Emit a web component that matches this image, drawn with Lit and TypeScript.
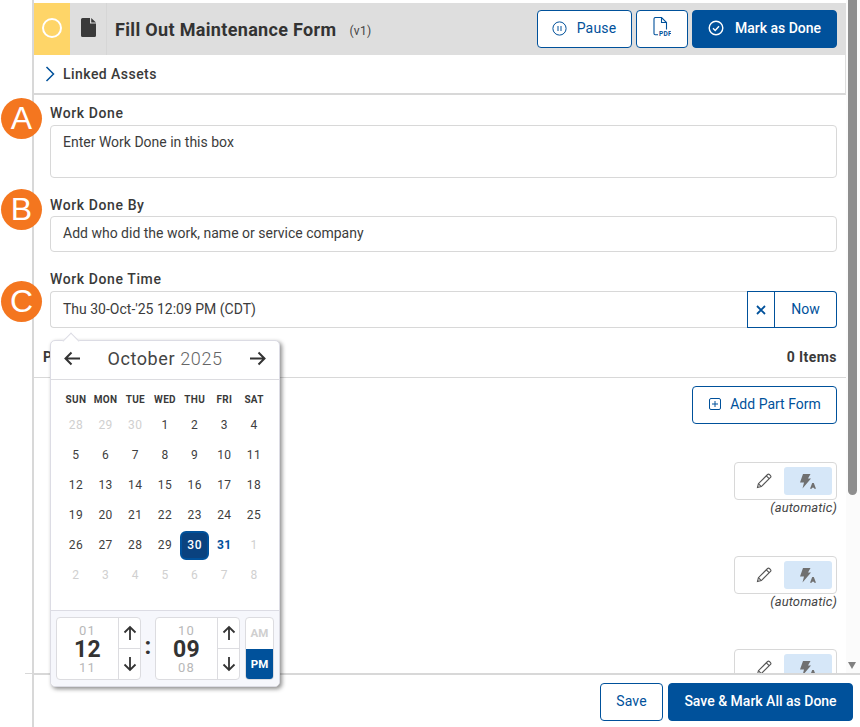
import { LitElement, html, css } from "lit";
import { customElement } from "lit/decorators.js";

const upArrow = html`<svg width="14" height="16" viewBox="0 0 14 16" fill="none" stroke="#333" stroke-width="1.8"><path d="M7 15V2M1.5 7.5L7 2l5.5 5.5"/></svg>`;
const downArrow = html`<svg width="14" height="16" viewBox="0 0 14 16" fill="none" stroke="#333" stroke-width="1.8"><path d="M7 1v13M1.5 8.5L7 14l5.5-5.5"/></svg>`;
const pencil = html`<svg width="16" height="16" viewBox="0 0 16 16" fill="none" stroke="#555" stroke-width="1.1"><path d="M1.5 14.5l.9-3.8L11.6 1.5a1.3 1.3 0 0 1 1.8 0l1.1 1.1a1.3 1.3 0 0 1 0 1.8L5.300 13.600z"/><path d="M2.4 10.700l2.900 2.900M10.300 2.800l2.900 2.900"/></svg>`;
const bolt = html`<svg width="16" height="15" viewBox="0 0 16 15" fill="#707070"><path d="M3 0H10.500L8 4.500H11L2.500 14.500 4 8.500H0z"/><path d="M10 14.700L12.200 9h1.600L16 14.700h-1.700l-.35-1h-1.900l-.35 1z"/></svg>`;

const WEEK = ["SUN", "MON", "TUE", "WED", "THU", "FRI", "SAT"];
const DAYS: [string, string][] = [
  ["28", "o"], ["29", "o"], ["30", "o"], ["1", ""], ["2", ""], ["3", ""], ["4", ""],
  ["5", ""], ["6", ""], ["7", ""], ["8", ""], ["9", ""], ["10", ""], ["11", ""],
  ["12", ""], ["13", ""], ["14", ""], ["15", ""], ["16", ""], ["17", ""], ["18", ""],
  ["19", ""], ["20", ""], ["21", ""], ["22", ""], ["23", ""], ["24", ""], ["25", ""],
  ["26", ""], ["27", ""], ["28", ""], ["29", ""], ["30", "sel"], ["31", "today"], ["1", "o"],
  ["2", "o"], ["3", "o"], ["4", "o"], ["5", "o"], ["6", "o"], ["7", "o"], ["8", "o"],
];

@customElement("app-root")
export class AppRoot extends LitElement {
  static styles = css`
    :host { display: block; width: 860px; height: 727px; position: relative; overflow: hidden; background: #fff;
      font-family: Roboto, "Liberation Sans", sans-serif; color: #333; font-size: 14px; }
    * { box-sizing: border-box; }
    .page { display: flex; height: 727px; padding-left: 32px; }
    .main { flex: 1; min-width: 0; display: flex; flex-direction: column; border-left: 2px solid #d8d8d8; }
    .viewport { flex: 1; min-height: 0; display: flex; overflow: hidden; }
    .content { flex: 1; min-width: 0; padding-top: 3px; overflow: hidden; }
    .scrollbar { width: 14px; background: #fbfbfb; padding: 0 3px 0 2px; position: relative; }
    .thumb { height: 495px; background: #8e8e8e; border-radius: 0 0 5px 5px; }
    .sb-arrow { position: absolute; left: 2px; bottom: 4px; width: 0; height: 0; border-left: 4.5px solid transparent; border-right: 4.5px solid transparent; border-top: 7px solid #808080; }

    .head { height: 52px; background: #dedede; display: flex; align-items: center; }
    .status { width: 36px; height: 52px; background: #fed568; display: flex; align-items: center; justify-content: center; padding-bottom: 2px; }
    .ring { width: 20px; height: 20px; border: 2px solid #fff; border-radius: 50%; }
    .doc { width: 37px; height: 52px; display: flex; align-items: center; justify-content: center; border-right: 1px solid #d6d6d6; padding-bottom: 3px; }
    .title { margin-left: 8px; font-size: 18px; font-weight: 700; letter-spacing: .33px; color: #333; }
    .ver { margin-left: 13px; font-size: 12px; color: #444; letter-spacing: .3px; margin-top: 4px; }
    .head-actions { margin-left: auto; margin-right: 9px; display: flex; gap: 4px; }
    .btn { height: 38px; border: 1px solid #00519b; border-radius: 4px; background: #fff; color: #00519b; font: 400 14px Roboto, sans-serif; letter-spacing: .2px;
      display: inline-flex; align-items: center; justify-content: center; gap: 9px; padding: 0 0 2px; }
    .btn.solid { background: #00519b; color: #fff; font-weight: 500; letter-spacing: 0; }
    .pause { width: 95px; gap: 10px; padding-right: 1px; }
    .pdf { width: 52px; }
    .done { width: 145px; gap: 11px; }
    .linked { height: 40px; display: flex; align-items: center; gap: 8px; padding-left: 11px; border-right: 1px solid #dedede; border-bottom: 2px solid #d8d8d8; font-size: 14px; font-weight: 500; letter-spacing: .45px; color: #3a3a3a; }

    .fields { padding: 0 9px 0 16px; }
    .label { display: block; font-size: 14px; line-height: 16px; font-weight: 500; letter-spacing: .6px; color: #3a3a3a; }
    .box { border: 1px solid #d8d8d8; border-radius: 4px; padding: 0 12px 2px; font-size: 14px; color: #3c3c3c; background: #fff; display: flex; align-items: center; }
    .l1 { margin-top: 10px; }
    .area { height: 53px; margin-top: 4px; align-items: flex-start; padding-top: 8px; }
    .l2 { margin-top: 19px; }
    .by { height: 36px; margin-top: 3px; }
    .l3 { margin-top: 19px; }
    .time-row { display: flex; height: 37px; margin-top: 4px; }
    .time-row .box { flex: 1; border-right: none; border-radius: 4px 0 0 4px; }
    .clear { width: 28px; border: 1px solid #00519b; background: #fff; display: flex; align-items: center; justify-content: center; }
    .now { width: 62px; border: 1px solid #00519b; border-left: none; border-radius: 0 4px 4px 0; color: #00519b; font-size: 14px; display: flex; align-items: center; justify-content: center; padding-bottom: 2px; }

    .parts { margin-top: 20px; height: 30px; padding: 0 9px 0 9px; display: flex; justify-content: space-between; border-bottom: 1px solid #d8d8d8; font-size: 14px; font-weight: 700; letter-spacing: .45px; line-height: 19px; color: #3a3a3a; }
    .rows { padding: 8px 9px 0 0; display: flex; flex-direction: column; align-items: flex-end; }
    .add { width: 145px; gap: 9px; letter-spacing: 0; padding-left: 1px; }
    .toggle { width: 103px; height: 38px; border: 1px solid #d8d8d8; border-radius: 4px; display: flex; align-items: center; padding: 4px 4px 4px 0; flex: none; }
    .toggle .p { width: 49px; display: flex; justify-content: center; padding-left: 8px; }
    .toggle .a { flex: 1; height: 28px; background: #d6e7f8; border-radius: 3px; display: flex; align-items: center; justify-content: center; }
    .auto { font-size: 13px; font-style: italic; color: #444; letter-spacing: .12px; line-height: 14px; margin-top: 1px; height: 55px; }
    .t1 { margin-top: 38px; }
    .t3 { margin-top: -1px; }

    .foot { height: 54px; border-top: 2px solid #d8d8d8; display: flex; justify-content: flex-end; gap: 5px; padding: 8px 7px 0 0; background: #fff; position: relative; z-index: 1; }
    .tick { position: absolute; left: -9px; top: -2px; width: 9px; height: 1px; background: #d8d8d8; }
    .save { width: 63px; }
    .saveall { width: 185px; }

    .badge { position: absolute; left: 1px; width: 41px; height: 41px; border-radius: 50%; background: #f4761f; color: #fff; font: 400 32px "Liberation Sans", Arial, sans-serif; display: flex; align-items: center; justify-content: center; }

    .cal { position: absolute; z-index: 3; left: 50px; top: 340px; width: 230px; height: 347px; background: #fff; border: 1px solid #dcdce4; border-radius: 5px; box-shadow: 2px 2px 4px rgba(0,0,0,.45); display: flex; flex-direction: column; }
    .tip { position: absolute; left: 14px; top: -6px; width: 12px; height: 12px; background: #fff; border-left: 1px solid #dcdce4; border-top: 1px solid #dcdce4; transform: rotate(45deg); }
    .cal-head { height: 39px; display: flex; align-items: center; justify-content: space-between; padding: 0 12px 4px 12px; border-bottom: 1px solid #dcdce0; position: relative; }
    .month { font-size: 18px; letter-spacing: .6px; color: #444; font-weight: 400; }
    .month span { color: #666; font-weight: 300; }
    .grid { display: grid; grid-template-columns: repeat(7, 29.7px); justify-content: center; padding: 0 4px; }
    .wk { height: 30px; display: flex; align-items: center; justify-content: center; font-size: 10px; font-weight: 700; letter-spacing: .3px; color: #3a3a3a; padding-top: 8px; }
    .d { height: 30px; display: flex; align-items: center; justify-content: center; font-size: 12px; letter-spacing: .5px; color: #404040; }
    .d.o { color: #d0d0d0; }
    .d.today { color: #00519b; font-weight: 700; }
    .d.sel span { width: 29px; height: 29px; display: flex; align-items: center; justify-content: center; color: #fff; font-weight: 500; background: #0a427f; border: 2px solid #00519b; border-radius: 6px; }
    .cal-time { margin-top: auto; height: 76px; background: #f6f7fc; border-top: 1px solid #dcdce4; border-radius: 0 0 5px 5px; display: flex; padding: 6px 5px 0; }
    .spin { width: 85px; height: 63px; background: #fff; border: 1px solid #dcdce0; border-radius: 4px; display: flex; }
    .vals { flex: 1; display: flex; flex-direction: column; align-items: center; justify-content: center; color: #b8b8b8; font-size: 13px; letter-spacing: 1.2px; line-height: 14px; padding-top: 2px; }
    .vals b { color: #333; font-size: 23px; line-height: 23px; font-weight: 700; letter-spacing: .4px; }
    .arrows { width: 22px; border-left: 1px solid #dcdce0; display: flex; flex-direction: column; }
    .arrows div { flex: 1; display: flex; align-items: center; justify-content: center; }
    .arrows div + div { border-top: 1px solid #dcdce0; }
    .colon { width: 14px; text-align: center; font-size: 24px; font-weight: 700; line-height: 58px; color: #333; }
    .ampm { width: 29px; height: 63px; margin-left: 5px; border: 1px solid #dcdce0; border-radius: 4px; overflow: hidden; display: flex; flex-direction: column; font-size: 11.5px; font-weight: 700; background: #fff; }
    .ampm div { flex: 1; display: flex; align-items: center; justify-content: center; color: #cfcfcf; }
    .ampm .on { background: #00519b; color: #fff; }
  `;

  render() {
    return html`
      <div class="page">
        <div class="main">
          <div class="viewport">
            <div class="content">
              <div class="head">
                <div class="status"><div class="ring"></div></div>
                <div class="doc"><svg width="15" height="19" viewBox="0 0 15 19" fill="#3a3a3a"><path d="M1.500 0H9v5.500h6v12A1.500 1.500 0 0 1 13.500 19h-12A1.500 1.500 0 0 1 0 17.500v-16A1.500 1.500 0 0 1 1.500 0zM10.200 0L15 4.400h-4.800z"/></svg></div>
                <div class="title">Fill Out Maintenance Form</div>
                <div class="ver">(v1)</div>
                <div class="head-actions">
                  <button class="btn pause"><svg width="15" height="15" viewBox="0 0 15 15" fill="none" stroke="#00519b"><circle cx="7.500" cy="7.500" r="6.600"/><path d="M6 5v5M9 5v5"/></svg>Pause</button>
                  <button class="btn pdf"><svg width="18" height="22" viewBox="0 0 18 22" fill="none" stroke="#00519b" stroke-width="1.100"><path d="M1 14V2A1.500 1.500 0 0 1 2.500.500H8.500L13.500 5.500V12.500M8.500.500V5.500H13.500"/><path d="M1 14v2.500A1.200 1.200 0 0 0 2.200 17.700H5"/><text x="6" y="18.700" font-family="Roboto, sans-serif" font-size="6.500" font-weight="700" fill="#00519b" stroke="none" letter-spacing=".3">PDF</text></svg></button>
                  <button class="btn solid done"><svg width="16" height="16" viewBox="0 0 16 16" fill="none" stroke="#fff" stroke-width="1.400"><circle cx="8" cy="8" r="6.800"/><path d="M5 8.300l2.200 2.200L11 6.200"/></svg>Mark as Done</button>
                </div>
              </div>
              <div class="linked"><svg width="10" height="16" viewBox="0 0 10 16" fill="none" stroke="#00519b" stroke-width="1.500"><path d="M1.500 1l7 7-7 7"/></svg>Linked Assets</div>

              <div class="fields">
                <span class="label l1">Work Done</span>
                <div class="box area">Enter Work Done in this box</div>
                <span class="label l2">Work Done By</span>
                <div class="box by">Add who did the work, name or service company</div>
                <span class="label l3">Work Done Time</span>
                <div class="time-row">
                  <div class="box">Thu 30-Oct-'25 12:09 PM (CDT)</div>
                  <div class="clear"><svg width="10" height="10" viewBox="0 0 10 10" stroke="#00519b" stroke-width="1.800"><path d="M1 1l8 8M9 1l-8 8"/></svg></div>
                  <div class="now">Now</div>
                </div>
              </div>

              <div class="parts"><span>Parts</span><span>0 Items</span></div>
              <div class="rows">
                <button class="btn add"><svg width="12" height="12" viewBox="0 0 12 12" fill="none" stroke="#00519b"><rect x=".5" y=".5" width="11" height="11" rx="1.500"/><path d="M6 3v6M3 6h6"/></svg>Add Part Form</button>
                ${[0, 1, 2].map((i) => html`
                  <div class="toggle ${i === 0 ? "t1" : i === 2 ? "t3" : ""}"><div class="p">${pencil}</div><div class="a">${bolt}</div></div>
                  ${i < 2 ? html`<div class="auto">(automatic)</div>` : ""}`)}
              </div>
            </div>
            <div class="scrollbar"><div class="thumb"></div><div class="sb-arrow"></div></div>
          </div>
          <div class="foot">
            <div class="tick"></div>
            <button class="btn save">Save</button>
            <button class="btn solid saveall">Save &amp; Mark All as Done</button>
          </div>
        </div>
      </div>

      <div class="badge" style="top:98px">A</div>
      <div class="badge" style="top:189px">B</div>
      <div class="badge" style="top:281px">C</div>

      <div class="cal">
        <div class="tip"></div>
        <div class="cal-head">
          <svg width="17" height="15" viewBox="0 0 17 15" fill="none" stroke="#333" stroke-width="2"><path d="M17 7.500H2M8.500 1.500l-6 6 6 6"/></svg>
          <div class="month">October <span>2025</span></div>
          <svg width="17" height="15" viewBox="0 0 17 15" fill="none" stroke="#333" stroke-width="2"><path d="M0 7.500h15M8.500 1.500l6 6-6 6"/></svg>
        </div>
        <div class="grid">
          ${WEEK.map((w) => html`<div class="wk">${w}</div>`)}
          ${DAYS.map(([n, c]) => html`<div class="d ${c}"><span>${n}</span></div>`)}
        </div>
        <div class="cal-time">
          <div class="spin"><div class="vals">01<b>12</b>11</div><div class="arrows"><div>${upArrow}</div><div>${downArrow}</div></div></div>
          <div class="colon">:</div>
          <div class="spin"><div class="vals">10<b>09</b>08</div><div class="arrows"><div>${upArrow}</div><div>${downArrow}</div></div></div>
          <div class="ampm"><div>AM</div><div class="on">PM</div></div>
        </div>
      </div>
    `;
  }
}
